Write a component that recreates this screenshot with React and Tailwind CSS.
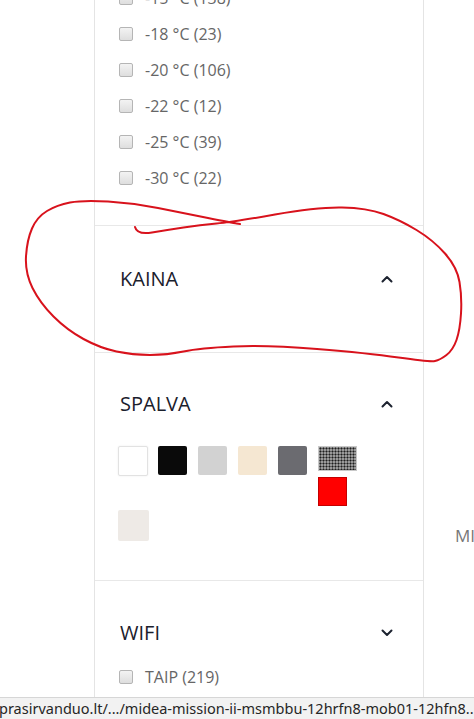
import React from 'react';

const temps = [
  { label: '-15 °C', count: 138 },
  { label: '-18 °C', count: 23 },
  { label: '-20 °C', count: 106 },
  { label: '-22 °C', count: 12 },
  { label: '-25 °C', count: 39 },
  { label: '-30 °C', count: 22 },
];

// hand-drawn red loop around the KAINA block
const scribble = [
  [135, 227], [137, 235], [167, 230], [200, 225], [233, 222], [317, 207], [367, 208],
  [400, 220], [433, 240], [457, 267], [462, 297], [460, 330], [453, 350], [440, 360],
  [430, 362], [367, 353], [267, 345], [200, 348], [167, 355], [133, 355], [100, 348],
  [67, 330], [40, 303], [25, 273], [27, 240], [37, 217], [57, 205], [83, 200],
  [133, 203], [183, 213], [233, 223], [240, 224],
];

const smoothPath = (pts) => {
  let d = `M${pts[0][0]},${pts[0][1]}`;
  for (let i = 1; i < pts.length - 1; i++) {
    const mx = (pts[i][0] + pts[i + 1][0]) / 2;
    const my = (pts[i][1] + pts[i + 1][1]) / 2;
    d += ` Q${pts[i][0]},${pts[i][1]} ${mx},${my}`;
  }
  const last = pts[pts.length - 1];
  return d + ` L${last[0]},${last[1]}`;
};

const Checkbox = () => (
  <span className="w-[14px] h-[14px] rounded-[2px] border border-[#b5b5b5] bg-gradient-to-b from-[#f3f3f3] to-[#dedede] shrink-0" />
);

const Chevron = ({ up }) => (
  <svg width="12" height="8" viewBox="0 0 12 8" fill="none">
    <path
      d={up ? 'M1.5 6.5 L6 2 L10.5 6.5' : 'M1.5 1.5 L6 6 L10.5 1.5'}
      stroke="#1d2330"
      strokeWidth="2"
      strokeLinecap="round"
      strokeLinejoin="round"
    />
  </svg>
);

const SectionHeader = ({ title, up }) => (
  <div className="flex items-center justify-between pl-[25px] pr-[30px] h-[22px]">
    <span className="text-[20px] text-[#1a202c] leading-none">{title}</span>
    <Chevron up={up} />
  </div>
);

const Swatch = ({ className }) => (
  <span className={`block rounded-[2px] ${className}`} />
);

export default function App() {
  return (
    <div className="relative w-[474px] h-[719px] overflow-hidden bg-white font-['Open_Sans',sans-serif]">
      <div className="flex">
        <div className="w-[94px] shrink-0" />

        <div className="w-[330px] shrink-0 border-x border-[#e4e4e4] min-h-[740px]">
          {/* temperature list */}
          <div className="-mt-[20px] pb-[29px]">
            {temps.map((t) => (
              <label key={t.label} className="flex items-center h-[36px] pl-[24px] gap-[12px]">
                <Checkbox />
                <span className="text-[16px] text-[#666]">
                  {t.label} ({t.count})
                </span>
              </label>
            ))}
          </div>

          {/* price */}
          <div className="border-t border-[#e8e8e8] h-[127px] pt-[42px]">
            <SectionHeader title="KAINA" up />
          </div>

          {/* colour */}
          <div className="border-t border-[#e8e8e8] h-[228px] pt-[40px]">
            <SectionHeader title="SPALVA" up />
            <div className="flex flex-wrap pl-[23px] mt-[31px] gap-y-[4px] w-[290px]">
              <div className="w-[40px]"><Swatch className="w-[30px] h-[30px] bg-white border border-[#e2e2e2] shadow-[0_0_2px_rgba(0,0,0,0.08)]" /></div>
              <div className="w-[40px]"><Swatch className="w-[29px] h-[29px] bg-[#0a0a0a]" /></div>
              <div className="w-[40px]"><Swatch className="w-[29px] h-[29px] bg-[#d2d2d2]" /></div>
              <div className="w-[40px]"><Swatch className="w-[29px] h-[29px] bg-[#f5e7d2]" /></div>
              <div className="w-[40px]"><Swatch className="w-[29px] h-[29px] bg-[#6b6b70]" /></div>
              <div className="w-[44px] flex flex-col gap-[6px]">
                <span className="block w-[39px] h-[25px] border border-[#c8c8c8] bg-[#9a9a9a] bg-[radial-gradient(circle,#1e1e1e_0.9px,transparent_1.1px)] bg-[length:3px_3px]" />
                <span className="block w-[29px] h-[29px] bg-[#ff0000] border border-[#c40000]" />
              </div>
              <div className="w-[40px]"><Swatch className="w-[31px] h-[31px] bg-[#eeeae6]" /></div>
            </div>
          </div>

          {/* wifi */}
          <div className="border-t border-[#e8e8e8] pt-[41px]">
            <SectionHeader title="WIFI" />
            <label className="flex items-center h-[36px] pl-[24px] gap-[12px] mt-[15px]">
              <Checkbox />
              <span className="text-[16px] text-[#666]">TAIP (219)</span>
            </label>
          </div>
        </div>

        <div className="pl-[31px] pt-[523px]">
          <span className="text-[17px] text-[#777] whitespace-nowrap">MIDEA</span>
        </div>
      </div>

      {/* browser status bar */}
      <div className="absolute left-0 right-0 bottom-0 h-[22px] bg-[#f2f2f2] border-t border-[#d6d6d6] overflow-hidden flex items-center">
        <span className="-ml-[1px] text-[14.5px] text-[#262626] whitespace-nowrap font-['Noto_Sans',sans-serif] leading-none">
          prasirvanduo.lt/.../midea-mission-ii-msmbbu-12hrfn8-mob01-12hfn8..
        </span>
      </div>

      <svg className="absolute inset-0 pointer-events-none" width="474" height="719" viewBox="0 0 474 719">
        <path d={smoothPath(scribble)} fill="none" stroke="#d8121c" strokeWidth="2" strokeLinecap="round" strokeLinejoin="round" />
      </svg>
    </div>
  );
}
